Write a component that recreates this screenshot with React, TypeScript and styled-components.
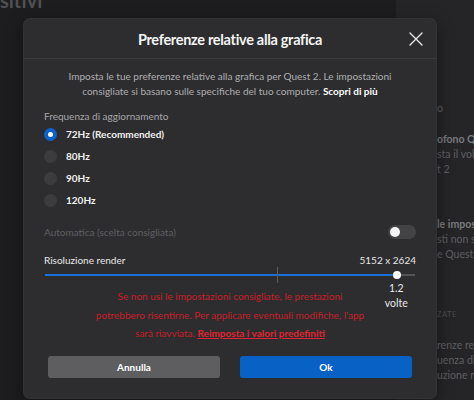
import styled, { createGlobalStyle } from "styled-components";

const Global = createGlobalStyle`
  html, body { margin: 0; padding: 0; background: #1c1c1e; }
  body { font-family: Lato, "Noto Sans", sans-serif; }
  * { box-sizing: border-box; }
`;

const Screen = styled.div`
  position: relative;
  width: 474px;
  height: 400px;
  overflow: hidden;
  display: flex;
  background: #1c1c1e;
`;

const Main = styled.div`
  flex: 0 0 396px;
  background: #1d1d1f;
`;

const PageTitle = styled.div`
  font-size: 20px;
  font-weight: 700;
  color: #505052;
  margin-top: -13px;
  line-height: 26px;
`;

const Side = styled.div`
  flex: 1;
  min-width: 0;
  overflow: hidden;
  background: #252527;
  display: flex;
  flex-direction: column;
  padding: 101px 0 0 41px;
`;

const SideGroup = styled.div<{ $top: number }>`
  margin-top: ${({ $top }) => $top}px;
`;

const SideTitle = styled.div`
  font-size: 10.5px;
  font-weight: 700;
  line-height: 15px;
  color: #7a7a7d;
  white-space: nowrap;
`;

const SideText = styled.div`
  font-size: 10.5px;
  line-height: 15px;
  color: #5f5f62;
  white-space: nowrap;
`;

const SideCaps = styled.div`
  font-size: 7.5px;
  letter-spacing: 0.5px;
  line-height: 12px;
  color: #4c4c4f;
`;

const Backdrop = styled.div`
  position: absolute;
  inset: 0;
  padding: 19px 0 0 24px;
`;

const Modal = styled.div`
  width: 412px;
  height: 379px;
  background: #2d2d2f;
  border-radius: 6px;
  box-shadow: 0 0 0 1px #333335, 0 4px 18px rgba(0, 0, 0, 0.45);
  display: flex;
  flex-direction: column;
  color: #ffffff;
`;

const Header = styled.div`
  position: relative;
  flex: 0 0 40px;
  border-bottom: 1px solid #3b3b3d;
  display: flex;
  align-items: center;
  justify-content: center;
`;

const Title = styled.div`
  font-size: 14.5px;
  font-weight: 700;
  letter-spacing: -0.3px;
  color: #f4f4f4;
  margin-top: 1px;
`;

const Close = styled.button`
  position: absolute;
  right: 13px;
  top: 13px;
  width: 14px;
  height: 14px;
  padding: 0;
  border: 0;
  background: none;
  color: #e6e6e6;
  display: flex;
`;

const Body = styled.div`
  flex: 1;
  display: flex;
  flex-direction: column;
  padding: 10px 20px 0;
`;

const Desc = styled.p`
  margin: 0;
  padding: 0 20px;
  font-size: 10px;
  line-height: 15px;
  color: #aeaeb0;
  text-align: center;
`;

const Strong = styled.span`
  color: #ffffff;
  font-weight: 700;
`;

const Label = styled.div<{ $dim?: boolean; $bright?: boolean }>`
  font-size: 10px;
  line-height: 14px;
  color: ${({ $dim, $bright }) =>
    $dim ? "#5f5f62" : $bright ? "#e8e8e8" : "#a6a6a8"};
`;

const Group = styled.div`
  margin-top: 10px;
  display: flex;
  flex-direction: column;
`;

const RadioRow = styled.div`
  display: flex;
  align-items: center;
  gap: 9px;
  height: 22px;
`;

const RadioDot = styled.span<{ $on: boolean }>`
  width: 13px;
  height: 13px;
  border-radius: 50%;
  background: ${({ $on }) => ($on ? "#0b63c9" : "#3c3c3f")};
  display: flex;
  align-items: center;
  justify-content: center;

  &::after {
    content: "";
    width: 5px;
    height: 5px;
    border-radius: 50%;
    background: #ffffff;
    display: ${({ $on }) => ($on ? "block" : "none")};
  }
`;

const RadioText = styled.span`
  font-size: 10px;
  font-weight: 700;
  color: #f0f0f0;
`;

const Row = styled.div<{ $top: number }>`
  display: flex;
  align-items: center;
  justify-content: space-between;
  margin-top: ${({ $top }) => $top}px;
`;

const Toggle = styled.span`
  width: 28px;
  height: 14px;
  border-radius: 7px;
  background: #434346;
  display: flex;
  align-items: center;
  padding-left: 2px;

  &::before {
    content: "";
    width: 10px;
    height: 10px;
    border-radius: 50%;
    background: #f4f4f4;
  }
`;

const SliderWrap = styled.div`
  position: relative;
  height: 14px;
  margin-top: 1px;
  display: flex;
  align-items: center;
`;

const Track = styled.div`
  position: relative;
  width: 100%;
  height: 2px;
  background: #545457;
  margin: 0 1px;
`;

const Fill = styled.div`
  position: absolute;
  left: 0;
  top: 0;
  bottom: 0;
  background: #1b6fd6;
`;

const Tick = styled.div`
  position: absolute;
  top: -7px;
  width: 1px;
  height: 16px;
  background: #5d5d60;
`;

const Thumb = styled.div`
  position: absolute;
  top: -3px;
  width: 8px;
  height: 8px;
  margin-left: -4px;
  border-radius: 50%;
  background: #ffffff;
`;

const ValueTag = styled.div`
  position: absolute;
  top: 7px;
  width: 40px;
  margin-left: -21px;
  text-align: center;
  font-size: 10.5px;
  line-height: 15px;
  color: #e8e8e8;
`;

const Warning = styled.p`
  margin: 5px 0 0;
  font-size: 10px;
  line-height: 18.5px;
  color: #c81e29;
  text-align: center;
`;

const WarnLink = styled.span`
  font-weight: 700;
  color: #e02432;
  text-decoration: underline;
`;

const Buttons = styled.div`
  display: flex;
  gap: 20px;
  padding: 13px 4px 0;
`;

const Btn = styled.button<{ $primary?: boolean }>`
  flex: 1;
  height: 22px;
  border: 0;
  border-radius: 3px;
  font-family: inherit;
  font-size: 10px;
  font-weight: 700;
  color: #ffffff;
  background: ${({ $primary }) => ($primary ? "#0862c6" : "#5e5e61")};
`;

const rates = ["72Hz (Recommended)", "80Hz", "90Hz", "120Hz"];

export default function App() {
  const value = 95.2;
  const tick = 62.6;
  return (
    <>
      <Global />
      <Screen>
        <Main>
          <PageTitle>sitivi</PageTitle>
        </Main>
        <Side>
          <SideText>o</SideText>
          <SideGroup $top={16}>
            <SideTitle>ofono Quest 2</SideTitle>
            <SideText>sta il volume</SideText>
            <SideText>t 2</SideText>
          </SideGroup>
          <SideGroup $top={40}>
            <SideTitle>le impostazioni</SideTitle>
            <SideText>sti non sono</SideText>
            <SideText>e Quest 2</SideText>
          </SideGroup>
          <SideGroup $top={47}>
            <SideCaps>ZATE</SideCaps>
          </SideGroup>
          <SideGroup $top={17}>
            <SideText>renze relative</SideText>
            <SideText>uenza di agg</SideText>
            <SideText>uzione render</SideText>
          </SideGroup>
        </Side>
        <Backdrop>
          <Modal>
            <Header>
              <Title>Preferenze relative alla grafica</Title>
              <Close aria-label="Chiudi">
                <svg width="14" height="14" viewBox="0 0 14 14">
                  <path
                    d="M1 1 L13 13 M13 1 L1 13"
                    stroke="currentColor"
                    strokeWidth="1.4"
                    strokeLinecap="round"
                  />
                </svg>
              </Close>
            </Header>
            <Body>
              <Desc>
                Imposta le tue preferenze relative alla grafica per Quest 2. Le
                impostazioni consigliate si basano sulle specifiche del tuo
                computer. <Strong>Scopri di più</Strong>
              </Desc>
              <Group>
                <Label>Frequenza di aggiornamento</Label>
                {rates.map((r, i) => (
                  <RadioRow key={r}>
                    <RadioDot $on={i === 0} />
                    <RadioText>{r}</RadioText>
                  </RadioRow>
                ))}
              </Group>
              <Row $top={14}>
                <Label $dim>Automatica (scelta consigliata)</Label>
                <Toggle />
              </Row>
              <Row $top={14}>
                <Label $bright>Risoluzione render</Label>
                <Label $bright>5152 x 2624</Label>
              </Row>
              <SliderWrap>
                <Track>
                  <Fill style={{ width: `${value}%` }} />
                  <Tick style={{ left: `${tick}%` }} />
                  <Thumb style={{ left: `${value}%` }} />
                  <ValueTag style={{ left: `${value}%` }}>
                    1.2
                    <br />
                    volte
                  </ValueTag>
                </Track>
              </SliderWrap>
              <Warning>
                Se non usi le impostazioni consigliate, le prestazioni
                <br />
                potrebbero risentirne. Per applicare eventuali modifiche, l'app
                <br />
                sarà riavviata. <WarnLink>Reimposta i valori predefiniti</WarnLink>
              </Warning>
              <Buttons>
                <Btn>Annulla</Btn>
                <Btn $primary>Ok</Btn>
              </Buttons>
            </Body>
          </Modal>
        </Backdrop>
      </Screen>
    </>
  );
}
